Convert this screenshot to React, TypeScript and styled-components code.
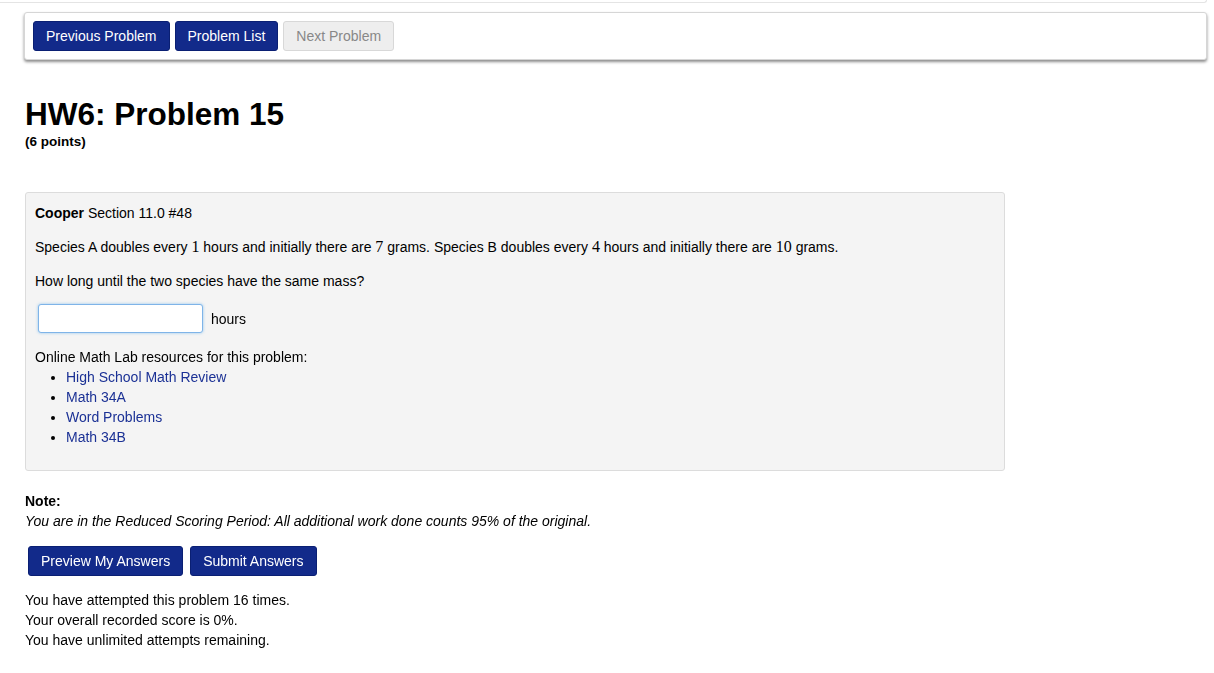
import { createGlobalStyle } from 'styled-components';
import styled from 'styled-components';

const GlobalStyle = createGlobalStyle`
  html, body {
    margin: 0;
    padding: 0;
    background: #fff;
  }
  body {
    font-family: "Liberation Sans", Arial, Helvetica, sans-serif;
    font-size: 14px;
    color: #000;
  }
`;

const Page = styled.div`
  width: 1214px;
  min-height: 673px;
  box-sizing: border-box;
`;

const TopStrip = styled.div`
  height: 2px;
  width: 1206px;
  border-bottom: 1px solid #e4e4e4;
  border-right: 1px solid #e4e4e4;
  border-bottom-right-radius: 3px;
`;

const Main = styled.div`
  padding: 0 7px 0 24px;
`;

const NavBar = styled.div`
  margin-top: 9px;
  width: 1183px;
  box-sizing: border-box;
  height: 48px;
  display: flex;
  align-items: center;
  gap: 5px;
  padding: 0 8px;
  background: #fff;
  border: 1px solid #d6d6d6;
  border-radius: 3px;
  box-shadow: 0 2px 3px rgba(0, 0, 0, 0.45);
`;

const Button = styled.button<{ $disabled?: boolean }>`
  height: 30px;
  padding: 0 12px;
  font-family: "Liberation Sans", Arial, sans-serif;
  font-size: 14px;
  border-radius: 3px;
  border: 1px solid ${(p) => (p.$disabled ? '#d8d8d8' : '#0a1f73')};
  background: ${(p) => (p.$disabled ? '#eeeeee' : '#122a8a')};
  color: ${(p) => (p.$disabled ? '#888' : '#fff')};
  cursor: ${(p) => (p.$disabled ? 'default' : 'pointer')};
`;

const Title = styled.h1`
  margin: 36px 0 0 1px;
  font-size: 31.5px;
  line-height: 36px;
  font-weight: bold;
`;

const Points = styled.div`
  margin: 2px 0 0 1px;
  font-size: 13.5px;
  font-weight: bold;
  line-height: 15px;
`;

const ProblemBox = styled.div`
  margin: 43px 0 0 1px;
  width: 980px;
  box-sizing: border-box;
  background: #f4f4f4;
  border: 1px solid #dcdcdc;
  border-radius: 3px;
  padding: 10px 9px 23px;
`;

const Para = styled.p`
  margin: 0 0 14px;
  line-height: 20px;
`;

const MathNum = styled.span`
  font-family: "Liberation Serif", "Times New Roman", serif;
  font-size: 16px;
`;

const AnswerRow = styled.div`
  display: flex;
  align-items: center;
  gap: 8px;
  height: 29px;
  margin: -1px 0 14px 3px;
`;

const AnswerInput = styled.input`
  width: 165px;
  height: 29px;
  box-sizing: border-box;
  border: 1px solid #7fb4e8;
  border-radius: 3px;
  box-shadow: 0 0 3px rgba(82, 168, 236, 0.6);
  background: #fff;
  outline: none;
  padding: 0 8px;
  font-size: 14px;
`;

const ResourceHeading = styled.div`
  line-height: 20px;
`;

const ResourceList = styled.ul`
  margin: 0;
  padding-left: 31px;
  line-height: 20px;
`;

const ResourceLink = styled.a`
  color: #1b3195;
  text-decoration: none;
`;

const Note = styled.div`
  margin: 20px 0 0 1px;
  line-height: 20px;
`;

const ActionRow = styled.div`
  display: flex;
  gap: 7px;
  margin: 15px 0 0 4px;
`;

const Status = styled.div`
  margin: 14px 0 0 1px;
  line-height: 20px;
`;

const resources = ['High School Math Review', 'Math 34A', 'Word Problems', 'Math 34B'];

export default function App() {
  return (
    <Page>
      <GlobalStyle />
      <TopStrip />
      <Main>
        <NavBar>
          <Button>Previous Problem</Button>
          <Button>Problem List</Button>
          <Button $disabled>Next Problem</Button>
        </NavBar>

        <Title>HW6: Problem 15</Title>
        <Points>(6 points)</Points>

        <ProblemBox>
          <Para>
            <b>Cooper</b> Section 11.0 #48
          </Para>
          <Para>
            Species A doubles every <MathNum>1</MathNum> hours and initially there are{' '}
            <MathNum>7</MathNum> grams. Species B doubles every <MathNum>4</MathNum> hours and
            initially there are <MathNum>10</MathNum> grams.
          </Para>
          <Para>How long until the two species have the same mass?</Para>
          <AnswerRow>
            <AnswerInput autoFocus />
            <span>hours</span>
          </AnswerRow>
          <ResourceHeading>Online Math Lab resources for this problem:</ResourceHeading>
          <ResourceList>
            {resources.map((r) => (
              <li key={r}>
                <ResourceLink href="#">{r}</ResourceLink>
              </li>
            ))}
          </ResourceList>
        </ProblemBox>

        <Note>
          <b>Note:</b>
          <br />
          <i>You are in the Reduced Scoring Period: All additional work done counts 95% of the original.</i>
        </Note>

        <ActionRow>
          <Button>Preview My Answers</Button>
          <Button>Submit Answers</Button>
        </ActionRow>

        <Status>
          You have attempted this problem 16 times.
          <br />
          Your overall recorded score is 0%.
          <br />
          You have unlimited attempts remaining.
        </Status>
      </Main>
    </Page>
  );
}
